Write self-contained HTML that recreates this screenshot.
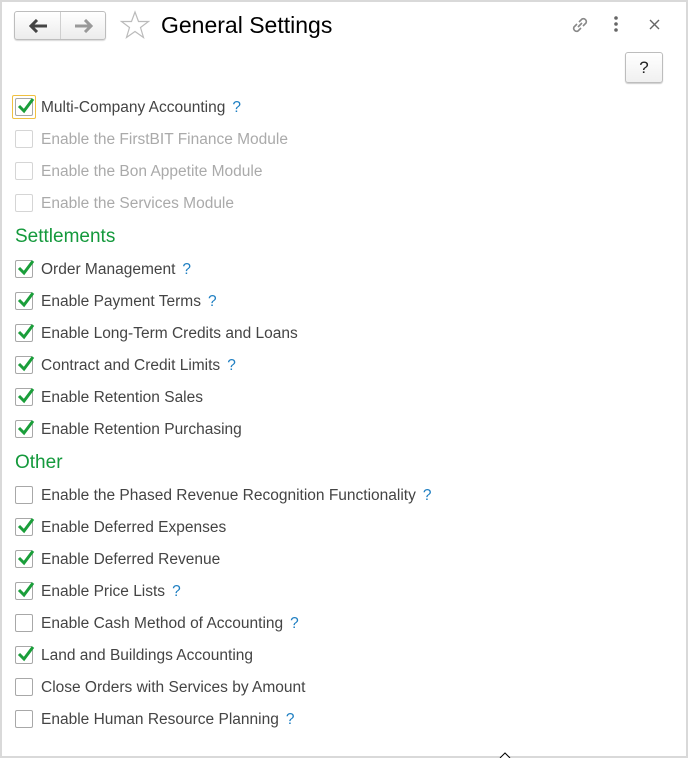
<!DOCTYPE html>
<html><head><style>
*{margin:0;padding:0;box-sizing:border-box}
body{width:688px;height:758px;background:#fff;font-family:"Liberation Sans",Arial,sans-serif;position:relative;overflow:hidden}
.frame{position:absolute;left:0;top:0;width:688px;height:758px;border:2px solid #d9d9d9;border-bottom-width:2px}
.nav{position:absolute;left:14px;top:11px;width:92px;height:29px;border:1px solid #bdbdbd;border-radius:3px;background:linear-gradient(#fff,#ececec);box-shadow:0 1px 1px rgba(0,0,0,.15)}
.nav .sep{position:absolute;left:45px;top:0;bottom:0;border-left:1px solid #cfcfcf}
h1{position:absolute;left:161px;top:12px;font-size:23px;font-weight:normal;color:#000}
.help{position:absolute;left:625px;top:52px;width:38px;height:31px;border:1px solid #bdbdbd;border-radius:3px;background:linear-gradient(#fff,#f0f0f0);box-shadow:0 1px 1px rgba(0,0,0,.2);font-size:17px;text-align:center;line-height:29px;color:#222}
.row{position:absolute;left:15px;height:20px;font-size:15.5px;color:#444;line-height:20px;white-space:nowrap}
.cb{position:absolute;left:0;top:1px;width:18px;height:18px;border:1px solid #a8a8a8;border-radius:2px;background:#fff}
.row span.t{position:absolute;left:26px;top:1px}
.row.dis{color:#aaa}.row.dis .cb{border-color:#d5d5d5}
.q{color:#1f7fc2;margin-left:7px}
.hd{position:absolute;left:15px;font-size:19px;color:#14993c}
.cb svg{position:absolute;left:1px;top:-2px}
</style></head><body>
<div class="frame"></div>
<div class="nav"><div class="sep"></div>
<svg style="position:absolute;left:14px;top:7px" width="20" height="14"><path d="M2 7H18M8 1L2 7L8 13" stroke="#444" stroke-width="3" fill="none"/></svg>
<svg style="position:absolute;left:59px;top:7px" width="20" height="14"><path d="M1 7H17M11 1L17 7L11 13" stroke="#999" stroke-width="3" fill="none"/></svg>
</div>
<svg style="position:absolute;left:119px;top:10px" width="32" height="30"><path d="M16 2L19.5 11.5H29.5L21.5 17.5L24.5 27.5L16 21.5L7.5 27.5L10.5 17.5L2.5 11.5H12.5Z" fill="none" stroke="#bbb" stroke-width="1.2"/></svg>
<h1>General Settings</h1>
<svg style="position:absolute;left:569px;top:14px" width="22" height="22"><path d="M9 13L13 9M8 10L5 13a3 3 0 0 0 4 4l3-3M14 12l3-3a3 3 0 0 0-4-4l-3 3" stroke="#888" stroke-width="1.6" fill="none"/></svg>
<svg style="position:absolute;left:613px;top:15px" width="6" height="18"><circle cx="3" cy="3" r="1.8" fill="#666"/><circle cx="3" cy="9" r="1.8" fill="#666"/><circle cx="3" cy="15" r="1.8" fill="#666"/></svg>
<svg style="position:absolute;left:649px;top:19px" width="12" height="12"><path d="M1 1L10 10M10 1L1 10" stroke="#666" stroke-width="1.4"/></svg>
<div class="help">?</div>

<div class="row" style="top:97px"><div class="cb" style="left:-3px;top:-2px;width:24px;height:24px;border:1px solid #f0c040;"><div class="cb" style="left:2px;top:2px"><svg width="18" height="18"><path d="M2 9L7 14L16 2" stroke="#1a9e3a" stroke-width="3" fill="none"/></svg></div></div><span class="t">Multi-Company Accounting<span class="q">?</span></span></div>
<div class="row dis" style="top:129px"><div class="cb"></div><span class="t">Enable the FirstBIT Finance Module</span></div>
<div class="row dis" style="top:161px"><div class="cb"></div><span class="t">Enable the Bon Appetite Module</span></div>
<div class="row dis" style="top:193px"><div class="cb"></div><span class="t">Enable the Services Module</span></div>
<div class="hd" style="top:226px">Settlements</div>
<div class="row" style="top:259px"><div class="cb"><svg width="18" height="18"><path d="M2 9L7 14L16 2" stroke="#1a9e3a" stroke-width="3" fill="none"/></svg></div><span class="t">Order Management<span class="q">?</span></span></div>
<div class="row" style="top:291px"><div class="cb"><svg width="18" height="18"><path d="M2 9L7 14L16 2" stroke="#1a9e3a" stroke-width="3" fill="none"/></svg></div><span class="t">Enable Payment Terms<span class="q">?</span></span></div>
<div class="row" style="top:323px"><div class="cb"><svg width="18" height="18"><path d="M2 9L7 14L16 2" stroke="#1a9e3a" stroke-width="3" fill="none"/></svg></div><span class="t">Enable Long-Term Credits and Loans</span></div>
<div class="row" style="top:355px"><div class="cb"><svg width="18" height="18"><path d="M2 9L7 14L16 2" stroke="#1a9e3a" stroke-width="3" fill="none"/></svg></div><span class="t">Contract and Credit Limits<span class="q">?</span></span></div>
<div class="row" style="top:387px"><div class="cb"><svg width="18" height="18"><path d="M2 9L7 14L16 2" stroke="#1a9e3a" stroke-width="3" fill="none"/></svg></div><span class="t">Enable Retention Sales</span></div>
<div class="row" style="top:419px"><div class="cb"><svg width="18" height="18"><path d="M2 9L7 14L16 2" stroke="#1a9e3a" stroke-width="3" fill="none"/></svg></div><span class="t">Enable Retention Purchasing</span></div>
<div class="hd" style="top:452px">Other</div>
<div class="row" style="top:485px"><div class="cb"></div><span class="t">Enable the Phased Revenue Recognition Functionality<span class="q">?</span></span></div>
<div class="row" style="top:517px"><div class="cb"><svg width="18" height="18"><path d="M2 9L7 14L16 2" stroke="#1a9e3a" stroke-width="3" fill="none"/></svg></div><span class="t">Enable Deferred Expenses</span></div>
<div class="row" style="top:549px"><div class="cb"><svg width="18" height="18"><path d="M2 9L7 14L16 2" stroke="#1a9e3a" stroke-width="3" fill="none"/></svg></div><span class="t">Enable Deferred Revenue</span></div>
<div class="row" style="top:581px"><div class="cb"><svg width="18" height="18"><path d="M2 9L7 14L16 2" stroke="#1a9e3a" stroke-width="3" fill="none"/></svg></div><span class="t">Enable Price Lists<span class="q">?</span></span></div>
<div class="row" style="top:613px"><div class="cb"></div><span class="t">Enable Cash Method of Accounting<span class="q">?</span></span></div>
<div class="row" style="top:645px"><div class="cb"><svg width="18" height="18"><path d="M2 9L7 14L16 2" stroke="#1a9e3a" stroke-width="3" fill="none"/></svg></div><span class="t">Land and Buildings Accounting</span></div>
<div class="row" style="top:677px"><div class="cb"></div><span class="t">Close Orders with Services by Amount</span></div>
<div class="row" style="top:709px"><div class="cb"></div><span class="t">Enable Human Resource Planning<span class="q">?</span></span></div>
<svg style="position:absolute;left:499px;top:752px" width="12" height="6"><path d="M1 6L6 1L11 6" stroke="#000" fill="#fff"/></svg>
</body></html>
